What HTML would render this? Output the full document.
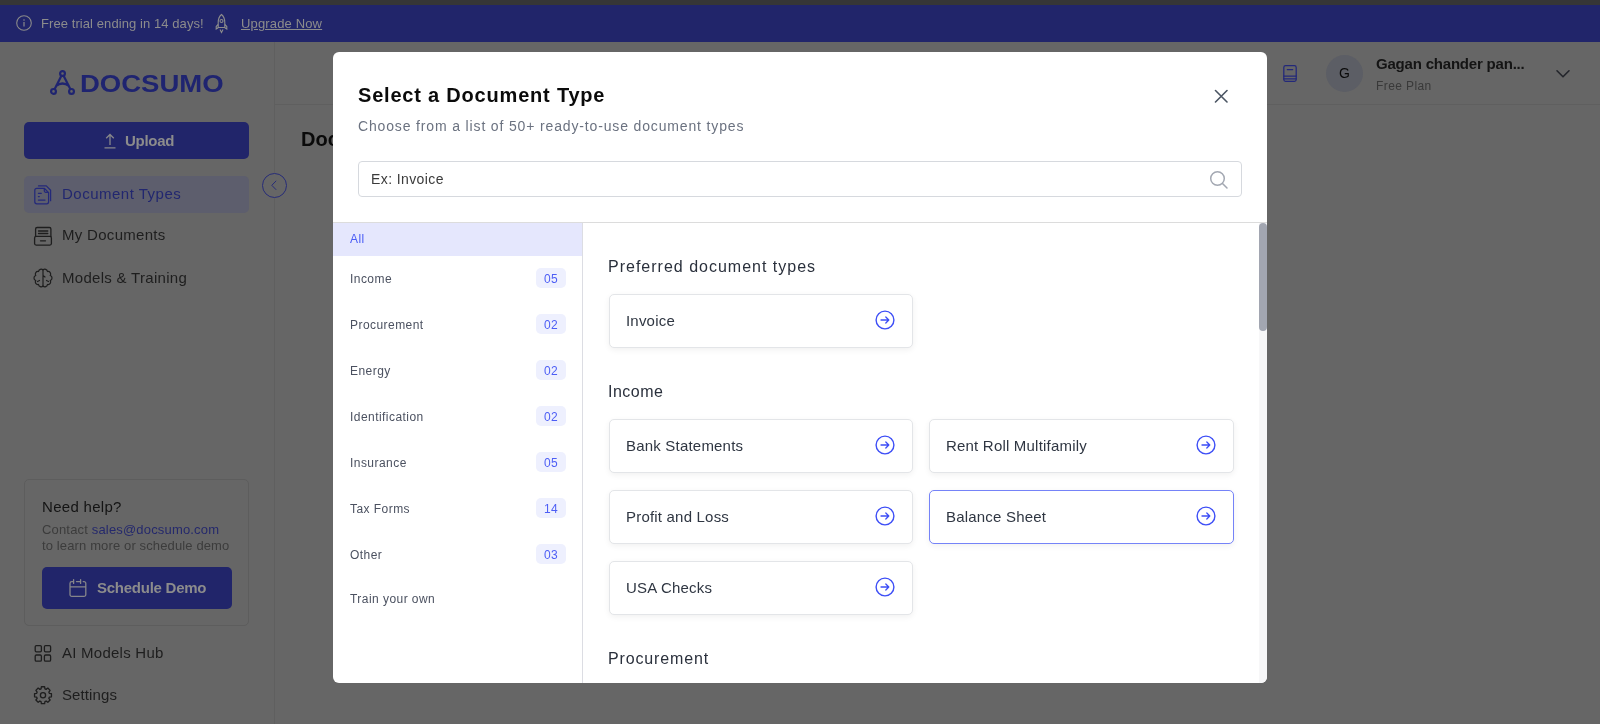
<!DOCTYPE html>
<html><head><meta charset="utf-8">
<style>
*{box-sizing:border-box;margin:0;padding:0}
html,body{width:1600px;height:724px;overflow:hidden;background:#666666;font-family:"Liberation Sans",sans-serif}
.a{position:absolute;white-space:nowrap;will-change:transform}
#topbar{position:absolute;left:0;top:0;width:1600px;height:5px;background:#363636}
#banner{position:absolute;left:0;top:5px;width:1600px;height:37px;background:#21256a}
#sidebar{position:absolute;left:0;top:42px;width:275px;height:682px;border-right:1px solid #5f5f5f}
#header{position:absolute;left:275px;top:42px;width:1325px;height:63px;border-bottom:1px solid #5f5f5f}
#modal{position:absolute;left:333px;top:52px;width:934px;height:631px;background:#fff;border-radius:6px;overflow:hidden}
.li{font-size:12px;line-height:12px;color:#4b5160;letter-spacing:0.45px}
.badge{width:30px;height:20px;border-radius:5px;background:#eef0fe;color:#4d5ef5;font-size:12px;line-height:22px;text-align:center;letter-spacing:0.3px}
.h2{font-size:16px;line-height:16px;color:#2a303c;letter-spacing:1px}
.card{position:absolute;width:304px;height:54px;background:#fff;border:1px solid #e3e5e8;border-radius:5px;box-shadow:0 2px 6px rgba(0,0,0,0.06)}
.ct{will-change:transform;position:absolute;left:15.5px;top:18.2px;font-size:15px;line-height:15px;color:#2f3642;letter-spacing:0.2px;white-space:nowrap}
.ar{position:absolute;right:17.5px;top:15.2px}
</style></head>
<body>
<div id="topbar"></div>
<div id="banner">
  <svg class="a" style="left:16px;top:10px" width="16" height="16" viewBox="0 0 16 16"><circle cx="8" cy="8" r="7.3" fill="none" stroke="#8a8a8a" stroke-width="1.1"/><rect x="7.4" y="7" width="1.2" height="4.5" fill="#8a8a8a"/><circle cx="8" cy="5" r="0.8" fill="#8a8a8a"/></svg>
  <span class="a" style="left:41px;top:12px;font-size:13px;line-height:13px;color:#8c8c8c;letter-spacing:0.08px">Free trial ending in 14 days!</span>
  <svg class="a" style="left:214px;top:8px" width="15" height="22" viewBox="0 0 15 22"><g fill="none" stroke="#8c8c8c" stroke-width="1.1"><path d="M7.5 1.5 C5 3.5 4.2 6.5 4.2 9.5 V14.5 H10.8 V9.5 C10.8 6.5 10 3.5 7.5 1.5 Z"/><circle cx="7.5" cy="8" r="1.5"/><path d="M4.2 11.5 L2.2 13.5 V16 L4.2 14.8 M10.8 11.5 L12.8 13.5 V16 L10.8 14.8 M6 16.5 L7.5 19.5 L9 16.5"/></g></svg>
  <span class="a" style="left:241px;top:12px;font-size:13px;line-height:13px;color:#8c8c8c;text-decoration:underline;letter-spacing:0.15px">Upgrade Now</span>
</div>
<div id="sidebar"></div>
<!-- logo -->
<svg class="a" style="left:50px;top:68px" width="26" height="28" viewBox="0 0 26 28">
  <g fill="none" stroke="#1f2470" stroke-width="2.2">
    <circle cx="12.5" cy="5.5" r="2.4"/>
    <circle cx="3.5" cy="23.4" r="2.4"/>
    <circle cx="21.5" cy="23.4" r="2.4"/>
    <path d="M11.4 7.7 L4.6 21.2 M13.6 7.7 L20.4 21.2 M5.8 18 Q12.5 13 19.2 18"/>
  </g>
</svg>
<span class="a" id="logo" style="left:80px;top:71.5px;font-size:24px;line-height:24px;font-weight:700;color:#1f2470;transform-origin:0 0;transform:scaleX(1.146)">DOCSUMO</span>
<!-- upload -->
<div class="a" style="left:24px;top:122px;width:225px;height:37px;background:#21256a;border-radius:5px"></div>
<svg class="a" style="left:102.7px;top:132.6px" width="14" height="16" viewBox="0 0 14 16"><g fill="none" stroke="#86868a" stroke-width="1.3"><path d="M7 1.5 V12 M3.2 5.2 L7 1.5 L10.8 5.2 M1.5 14.8 H12.5"/></g></svg>
<span class="a" style="left:125px;top:133px;font-size:15px;line-height:15px;font-weight:700;color:#8c8c8c;letter-spacing:-0.3px">Upload</span>
<!-- nav -->
<div class="a" style="left:24px;top:176px;width:225px;height:37px;background:#5d5e6d;border-radius:5px"></div>
<svg class="a" style="left:28px;top:180px" width="30" height="30" viewBox="28 180 30 30"><g fill="none" stroke="#24297a" stroke-width="1.25" stroke-linecap="round" stroke-linejoin="round"><path d="M36.8 188.3 H44.3 L48.6 192.6 V201.8 a2 2 0 0 1 -2 2 H36.8 a2 2 0 0 1 -2 -2 V190.3 a2 2 0 0 1 2 -2 Z M44.3 188.3 V190.8 a1.5 1.5 0 0 0 1.5 1.5 H48.6 M38.5 185.9 H46.3 L50.6 190.2 V200.7 M38.4 193.3 H41.3 M38.4 196.5 H39.3 M38.4 200 H45"/></g></svg>
<span class="a" style="left:62px;top:186px;font-size:15px;line-height:15px;color:#22276f;letter-spacing:0.5px">Document Types</span>
<svg class="a" style="left:28px;top:222px" width="30" height="30" viewBox="28 222 30 30"><g fill="none" stroke="#1e1e1e" stroke-width="1.3" stroke-linecap="round" stroke-linejoin="round"><path d="M35.6 236.4 V229 a1.5 1.5 0 0 1 1.5 -1.5 H49.4 a1.5 1.5 0 0 1 1.5 1.5 V236.4"/><rect x="34.6" y="236.4" width="16.8" height="8.7" rx="1.5"/><path d="M38.5 231 H47.8 M38.5 233.5 H47.8 M40.5 240.8 H45.5"/></g></svg>
<span class="a" style="left:62px;top:227px;font-size:15px;line-height:15px;color:#1e1e1e;letter-spacing:0.3px">My Documents</span>
<svg class="a" style="left:28px;top:264px" width="30" height="30" viewBox="28 264 30 30"><g fill="none" stroke="#1e1e1e" stroke-width="1.2" stroke-linecap="round" stroke-linejoin="round"><path d="M43.00 270.02 A2.6 2.6 0 0 1 47.47 271.54 A2.6 2.6 0 0 1 50.23 275.53 A2.6 2.6 0 0 1 50.23 280.47 A2.6 2.6 0 0 1 47.47 284.46 A2.6 2.6 0 0 1 43.00 285.98 A2.6 2.6 0 0 1 38.53 284.46 A2.6 2.6 0 0 1 35.77 280.47 A2.6 2.6 0 0 1 35.77 275.53 A2.6 2.6 0 0 1 38.53 271.54 A2.6 2.6 0 0 1 43.00 270.02 Z"/><path d="M43 270.5 V286 M43 275.5 L45 277 M37.5 281.5 L39.5 280.5 M48.5 281.5 L46.5 280.5"/></g></svg>
<span class="a" style="left:62px;top:269.5px;font-size:15px;line-height:15px;color:#1e1e1e;letter-spacing:0.3px">Models &amp; Training</span>
<!-- collapse -->
<svg class="a" style="left:261px;top:172px" width="27" height="27" viewBox="0 0 27 27"><circle cx="13.5" cy="13.5" r="12" fill="#666" stroke="#272c78" stroke-width="1"/><path d="M15.2 8.8 L10.8 13.3 L15.2 17.8" fill="none" stroke="#272c78" stroke-width="1"/></svg>
<!-- help card -->
<div class="a" style="left:24px;top:479px;width:225px;height:147px;border:1px solid #5d5d5d;border-radius:5px"></div>
<span class="a" style="left:42px;top:499px;font-size:15px;line-height:15px;color:#141414;letter-spacing:0.3px">Need help?</span>
<span class="a" style="left:42px;top:523px;font-size:13px;line-height:13px;color:#3c3c3c;letter-spacing:0.17px">Contact <span style="color:#25296c">sales@docsumo.com</span></span>
<span class="a" style="left:42px;top:539px;font-size:13px;line-height:13px;color:#3c3c3c;letter-spacing:0.13px">to learn more or schedule demo</span>
<div class="a" style="left:42px;top:567px;width:190px;height:42px;background:#21256a;border-radius:5px"></div>
<svg class="a" style="left:60px;top:570px" width="40" height="35" viewBox="60 570 40 35"><g fill="none" stroke="#86868a" stroke-width="1.3" stroke-linecap="round"><path d="M72.8 581.6 H71.8 a1.8 1.8 0 0 0 -1.8 1.8 V594.6 a1.8 1.8 0 0 0 1.8 1.8 H84 a1.8 1.8 0 0 0 1.8 -1.8 V583.4 a1.8 1.8 0 0 0 -1.8 -1.8 H83.2 M76.5 581.6 H80 M70 586.8 H85.8 M73.6 579.6 V583.4 M80.6 579.6 V583.4"/></g></svg>
<span class="a" style="left:97px;top:580.3px;font-size:15px;line-height:15px;font-weight:700;color:#8c8c8c;letter-spacing:-0.25px">Schedule Demo</span>
<!-- bottom nav -->
<svg class="a" style="left:28px;top:640px" width="30" height="30" viewBox="28 640 30 30"><g fill="none" stroke="#1e1e1e" stroke-width="1.3"><rect x="35.2" y="645.6" width="6.2" height="6.2" rx="1.2"/><rect x="44.4" y="645.6" width="6.2" height="6.2" rx="1.2"/><rect x="35.2" y="655" width="6.2" height="6.2" rx="1.2"/><rect x="44.4" y="655" width="6.2" height="6.2" rx="1.2"/></g></svg>
<span class="a" style="left:62px;top:645px;font-size:15px;line-height:15px;color:#1e1e1e;letter-spacing:0.25px">AI Models Hub</span>
<svg class="a" style="left:28px;top:680px" width="30" height="30" viewBox="28 680 30 30"><g fill="none" stroke="#1e1e1e" stroke-width="1.3" stroke-linejoin="round"><path d="M41.07 688.89 L41.36 686.76 L44.64 686.76 L44.93 688.89 L46.10 689.37 L47.81 688.07 L50.13 690.39 L48.83 692.10 L49.31 693.27 L51.44 693.56 L51.44 696.84 L49.31 697.13 L48.83 698.30 L50.13 700.01 L47.81 702.33 L46.10 701.03 L44.93 701.51 L44.64 703.64 L41.36 703.64 L41.07 701.51 L39.90 701.03 L38.19 702.33 L35.87 700.01 L37.17 698.30 L36.69 697.13 L34.56 696.84 L34.56 693.56 L36.69 693.27 L37.17 692.10 L35.87 690.39 L38.19 688.07 L39.90 689.37 Z"/><circle cx="43" cy="695.2" r="2.6"/></g></svg>
<span class="a" style="left:62px;top:687px;font-size:15px;line-height:15px;color:#1e1e1e;letter-spacing:0.1px">Settings</span>
<div id="header"></div>
<span class="a" style="left:301px;top:128.8px;font-size:20px;line-height:20px;font-weight:700;color:#0a0a0a">Document Types</span>
<svg class="a" style="left:1276px;top:58px" width="28" height="30" viewBox="1276 58 28 30"><g fill="none" stroke="#23287a" stroke-width="1.25" stroke-linecap="round"><rect x="1283.8" y="65.6" width="12.4" height="15.8" rx="1.8"/><path d="M1287.3 69.5 H1292.7 M1283.8 76.1 H1296.2 M1283.8 78.8 H1296.2"/></g></svg>
<div class="a" style="left:1326px;top:55px;width:37px;height:37px;border-radius:50%;background:#5c5e65"></div>
<span class="a" style="left:1339px;top:66px;font-size:14px;line-height:14px;color:#0a0a0a">G</span>
<span class="a" style="left:1376px;top:56.4px;font-size:15px;line-height:15px;font-weight:700;color:#141414;letter-spacing:-0.2px">Gagan chander pan...</span>
<span class="a" style="left:1376px;top:79.8px;font-size:12px;line-height:12px;color:#393939;letter-spacing:0.4px">Free Plan</span>
<svg class="a" style="left:1554px;top:67px" width="18" height="12" viewBox="0 0 18 12"><path d="M3 3.8 L9 9.8 L15 3.8" fill="none" stroke="#23252b" stroke-width="1.6" stroke-linecap="round" stroke-linejoin="round"/></svg>
<div id="modal">
<span class="a" style="left:25px;top:33px;font-size:20px;line-height:20px;font-weight:700;color:#0b0b0b;letter-spacing:0.8px">Select a Document Type</span>
<span class="a" style="left:25px;top:67px;font-size:14px;line-height:14px;color:#6b7280;letter-spacing:0.85px">Choose from a list of 50+ ready-to-use document types</span>
<svg class="a" style="left:881px;top:36.5px" width="14" height="14" viewBox="0 0 14 14"><path d="M1.5 1.5 L13 13 M13 1.5 L1.5 13" stroke="#4b5563" stroke-width="1.6" stroke-linecap="round" fill="none"/></svg>
<div class="a" style="left:25px;top:109px;width:884px;height:36px;border:1px solid #d6d9de;border-radius:4px"></div>
<span class="a" style="left:38px;top:120px;font-size:14px;line-height:14px;color:#3b3b3b;letter-spacing:0.4px">Ex: Invoice</span>
<svg class="a" style="left:876px;top:117.5px" width="20" height="20" viewBox="0 0 20 20"><circle cx="8.5" cy="8.5" r="6.8" fill="none" stroke="#a3a8b2" stroke-width="1.5"/><path d="M13.5 13.5 L18 18" stroke="#a3a8b2" stroke-width="1.5" stroke-linecap="round"/></svg>
<div class="a" style="left:0;top:170px;width:934px;height:1px;background:#dcdcdc"></div>
<div class="a" style="left:0;top:171px;width:249px;height:33px;background:#e5e7fd"></div>
<div class="a" style="left:249px;top:171px;width:1px;height:460px;background:#dcdde3"></div>
<span class="a" style="left:17px;top:181.3px;font-size:12px;line-height:12px;color:#4a5cf5;letter-spacing:0.4px">All</span>
<span class="a li" style="left:17px;top:221.2px">Income</span>
<div class="a badge" style="left:203px;top:216px">05</div>
<span class="a li" style="left:17px;top:267.2px">Procurement</span>
<div class="a badge" style="left:203px;top:262px">02</div>
<span class="a li" style="left:17px;top:313.2px">Energy</span>
<div class="a badge" style="left:203px;top:308px">02</div>
<span class="a li" style="left:17px;top:359.2px">Identification</span>
<div class="a badge" style="left:203px;top:354px">02</div>
<span class="a li" style="left:17px;top:405.2px">Insurance</span>
<div class="a badge" style="left:203px;top:400px">05</div>
<span class="a li" style="left:17px;top:451.2px">Tax Forms</span>
<div class="a badge" style="left:203px;top:446px">14</div>
<span class="a li" style="left:17px;top:497.2px">Other</span>
<div class="a badge" style="left:203px;top:492px">03</div>
<span class="a li" style="left:17px;top:541.1px">Train your own</span>

<span class="a h2" style="left:275px;top:206.5px">Preferred document types</span>
<div class="card" style="left:276px;top:242px;border-color:#e3e5e8"><span class="ct">Invoice</span><svg class="ar" width="20" height="20" viewBox="0 0 20 20"><circle cx="10" cy="10" r="8.9" fill="none" stroke="#3d4ef6" stroke-width="1.4"/><path d="M6 10 H13.8 M10.8 7 L13.8 10 L10.8 13" fill="none" stroke="#3d4ef6" stroke-width="1.3" stroke-linecap="round" stroke-linejoin="round"/></svg></div>

<span class="a h2" style="left:275px;top:331.9px;letter-spacing:0.5px">Income</span>
<div class="card" style="left:276px;top:367px;border-color:#e3e5e8"><span class="ct">Bank Statements</span><svg class="ar" width="20" height="20" viewBox="0 0 20 20"><circle cx="10" cy="10" r="8.9" fill="none" stroke="#3d4ef6" stroke-width="1.4"/><path d="M6 10 H13.8 M10.8 7 L13.8 10 L10.8 13" fill="none" stroke="#3d4ef6" stroke-width="1.3" stroke-linecap="round" stroke-linejoin="round"/></svg></div>
<div class="card" style="width:305px;left:596px;top:367px;border-color:#e3e5e8"><span class="ct">Rent Roll Multifamily</span><svg class="ar" width="20" height="20" viewBox="0 0 20 20"><circle cx="10" cy="10" r="8.9" fill="none" stroke="#3d4ef6" stroke-width="1.4"/><path d="M6 10 H13.8 M10.8 7 L13.8 10 L10.8 13" fill="none" stroke="#3d4ef6" stroke-width="1.3" stroke-linecap="round" stroke-linejoin="round"/></svg></div>
<div class="card" style="left:276px;top:438px;border-color:#e3e5e8"><span class="ct">Profit and Loss</span><svg class="ar" width="20" height="20" viewBox="0 0 20 20"><circle cx="10" cy="10" r="8.9" fill="none" stroke="#3d4ef6" stroke-width="1.4"/><path d="M6 10 H13.8 M10.8 7 L13.8 10 L10.8 13" fill="none" stroke="#3d4ef6" stroke-width="1.3" stroke-linecap="round" stroke-linejoin="round"/></svg></div>
<div class="card" style="width:305px;left:596px;top:438px;border-color:#7583f8"><span class="ct">Balance Sheet</span><svg class="ar" width="20" height="20" viewBox="0 0 20 20"><circle cx="10" cy="10" r="8.9" fill="none" stroke="#3d4ef6" stroke-width="1.4"/><path d="M6 10 H13.8 M10.8 7 L13.8 10 L10.8 13" fill="none" stroke="#3d4ef6" stroke-width="1.3" stroke-linecap="round" stroke-linejoin="round"/></svg></div>
<div class="card" style="left:276px;top:509px;border-color:#e3e5e8"><span class="ct">USA Checks</span><svg class="ar" width="20" height="20" viewBox="0 0 20 20"><circle cx="10" cy="10" r="8.9" fill="none" stroke="#3d4ef6" stroke-width="1.4"/><path d="M6 10 H13.8 M10.8 7 L13.8 10 L10.8 13" fill="none" stroke="#3d4ef6" stroke-width="1.3" stroke-linecap="round" stroke-linejoin="round"/></svg></div>

<span class="a h2" style="left:275px;top:598.8px;letter-spacing:0.85px">Procurement</span>
<div class="a" style="left:926px;top:171px;width:8px;height:460px;background:#f7f7f8"></div>
<div class="a" style="left:925.8px;top:171px;width:8.2px;height:108px;background:#a2a6b1;border-radius:4px"></div>
</div>
</body></html>
